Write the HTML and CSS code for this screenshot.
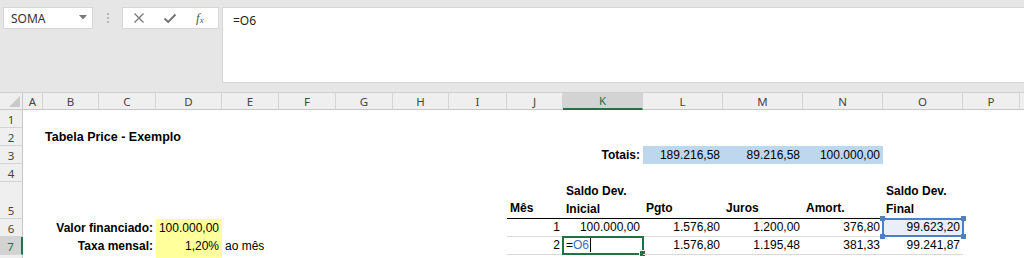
FILE: index.html
```html
<!DOCTYPE html>
<html>
<head>
<meta charset="utf-8">
<link rel="stylesheet" href="styles.css">
</head>
<body>
<div class="app">
  <div class="fbar">
    <div class="namebox">
      <span class="nb-text">SOMA</span>
      <svg class="nb-arrow" width="8" height="5" viewBox="0 0 8 5"><path d="M0 0 H8 L4 4.5 Z" fill="#7a7a7a"/></svg>
    </div>
    <div class="grip"><i></i><i></i><i></i></div>
    <div class="btns">
      <svg class="ic" width="14" height="14" viewBox="0 0 14 14"><path d="M2.5 2.5 L11.5 11.5 M11.5 2.5 L2.5 11.5" stroke="#777" stroke-width="1.3" fill="none"/></svg>
      <svg class="ic" width="14" height="14" viewBox="0 0 14 14"><path d="M1.5 7.5 L5.2 11 L12.5 3.5" stroke="#6f6f6f" stroke-width="1.8" fill="none"/></svg>
      <span class="fx"><i>f</i><sub>x</sub></span>
    </div>
    <div class="formula">=O6</div>
  </div>
  <div class="sheet">
    <!-- header row -->
    <div class="corner"><svg width="11" height="11" viewBox="0 0 11 11"><path d="M11 0 V11 H0 Z" fill="#c9c9c9"/></svg></div>
    <div class="ch">A</div><div class="ch">B</div><div class="ch">C</div><div class="ch">D</div><div class="ch">E</div><div class="ch">F</div><div class="ch">G</div><div class="ch">H</div><div class="ch">I</div><div class="ch">J</div><div class="ch sel">K</div><div class="ch">L</div><div class="ch">M</div><div class="ch">N</div><div class="ch">O</div><div class="ch">P</div><div class="ch last"></div>

    <!-- row 1 -->
    <div class="rh">1</div>
    <div class="c"></div><div class="c"></div><div class="c"></div><div class="c"></div><div class="c"></div><div class="c"></div><div class="c"></div><div class="c"></div><div class="c"></div><div class="c"></div><div class="c"></div><div class="c"></div><div class="c"></div><div class="c"></div><div class="c"></div><div class="c"></div><div class="c"></div>

    <!-- row 2 -->
    <div class="rh">2</div>
    <div class="c"></div><div class="c b title">Tabela Price - Exemplo</div><div class="c"></div><div class="c"></div><div class="c"></div><div class="c"></div><div class="c"></div><div class="c"></div><div class="c"></div><div class="c"></div><div class="c"></div><div class="c"></div><div class="c"></div><div class="c"></div><div class="c"></div><div class="c"></div><div class="c"></div>

    <!-- row 3 -->
    <div class="rh">3</div>
    <div class="c"></div><div class="c"></div><div class="c"></div><div class="c"></div><div class="c"></div><div class="c"></div><div class="c"></div><div class="c"></div><div class="c"></div><div class="c"></div><div class="c b r">Totais:</div><div class="c r blue">189.216,58</div><div class="c r blue">89.216,58</div><div class="c r blue">100.000,00</div><div class="c"></div><div class="c"></div><div class="c"></div>

    <!-- row 4 -->
    <div class="rh">4</div>
    <div class="c"></div><div class="c"></div><div class="c"></div><div class="c"></div><div class="c"></div><div class="c"></div><div class="c"></div><div class="c"></div><div class="c"></div><div class="c"></div><div class="c"></div><div class="c"></div><div class="c"></div><div class="c"></div><div class="c"></div><div class="c"></div><div class="c"></div>

    <!-- row 5 -->
    <div class="rh">5</div>
    <div class="c"></div><div class="c"></div><div class="c"></div><div class="c"></div><div class="c"></div><div class="c"></div><div class="c"></div><div class="c"></div><div class="c"></div><div class="c b hd">Mês</div><div class="c b hd two">Saldo Dev.<br>Inicial</div><div class="c b hd">Pgto</div><div class="c b hd">Juros</div><div class="c b hd">Amort.</div><div class="c b hd two">Saldo Dev.<br>Final</div><div class="c"></div><div class="c"></div>

    <!-- row 6 -->
    <div class="rh">6</div>
    <div class="c"></div><div class="c"></div><div class="c b r">Valor financiado:</div><div class="c r yel">100.000,00</div><div class="c"></div><div class="c"></div><div class="c"></div><div class="c"></div><div class="c"></div><div class="c r ln">1</div><div class="c r ln">100.000,00</div><div class="c r ln">1.576,80</div><div class="c r ln">1.200,00</div><div class="c r ln">376,80</div><div class="c r ln ref">99.623,20<i class="h1"></i><i class="h2"></i><i class="h3"></i><i class="h4"></i></div><div class="c"></div><div class="c"></div>

    <!-- row 7 -->
    <div class="rh sel">7</div>
    <div class="c"></div><div class="c"></div><div class="c b r">Taxa mensal:</div><div class="c r yel">1,20%</div><div class="c">ao mês</div><div class="c"></div><div class="c"></div><div class="c"></div><div class="c"></div><div class="c r ln">2</div><div class="c ln active"><span class="eq">=</span><span class="refc">O6</span><span class="caret"></span></div><div class="c r ln">1.576,80</div><div class="c r ln">1.195,48</div><div class="c r ln">381,33</div><div class="c r ln">99.241,87</div><div class="c"></div><div class="c"></div>

    <!-- row 8 (cut off at the bottom edge) -->
    <div class="rh"></div>
    <div class="c"></div><div class="c"></div><div class="c"></div><div class="c yel"></div><div class="c"></div><div class="c"></div><div class="c"></div><div class="c"></div><div class="c"></div><div class="c"></div><div class="c"></div><div class="c"></div><div class="c"></div><div class="c"></div><div class="c"></div><div class="c"></div><div class="c"></div>
  </div>
</div>
</body>
</html>
```

FILE: styles.css
```css
* { box-sizing: border-box; }
html, body { margin: 0; padding: 0; background: #ffffff; overflow: hidden; }
.app { width: 1024px; height: 258px; overflow: hidden; font-family: "Liberation Sans", Arial, sans-serif; }

.fbar {
  height: 93px;
  background: #e6e6e6;
  display: flex;
  align-items: flex-start;
  padding-top: 7px;
  border-bottom: 1px solid #d0d0d0;
}
.namebox {
  margin-left: 3px;
  width: 90px;
  height: 22px;
  background: #fff;
  border: 1px solid #d6d6d6;
  display: flex;
  align-items: center;
  justify-content: space-between;
  padding: 0 5px 0 7px;
  font-family: "Noto Sans", "Open Sans", sans-serif;
  font-size: 12px;
  color: #333;
}
.nb-arrow { margin-top: -2px; }
.grip {
  width: 29px;
  height: 22px;
  display: flex;
  flex-direction: column;
  align-items: center;
  justify-content: center;
  gap: 2px;
}
.grip i { display: block; width: 2px; height: 2px; background: #b8b8b8; }
.btns {
  width: 97px;
  height: 22px;
  background: #fff;
  border: 1px solid #d6d6d6;
  display: flex;
  align-items: center;
  padding: 0 0 0 9px;
  gap: 17px;
}
.fx {
  font-family: "Liberation Serif", serif;
  font-size: 13px;
  color: #555;
  line-height: 1;
  margin-left: 2px;
}
.fx i { font-style: italic; }
.fx sub { font-size: 9px; font-style: italic; vertical-align: -1px; }
.formula {
  margin-left: 3px;
  flex: 1;
  height: 76px;
  background: #fff;
  border: 1px solid #d6d6d6;
  border-right: none;
  padding: 4px 0 0 10px;
  font-family: "Noto Sans", "Open Sans", sans-serif;
  font-size: 12px;
  color: #222;
}

.sheet {
  display: grid;
  grid-template-columns: 23px 20px 56px 57px 66px 57px 57px 57px 56px 58px 56px 80px 80px 80px 80px 80px 57px 4px;
  grid-template-rows: 17px 18px 18px 18px 18px 37px 18px 18px 18px;
  font-size: 12px;
  color: #000;
}
.corner {
  background: #efefef;
  border-right: 1px solid #c8c8c8;
  border-bottom: 1px solid #c8c8c8;
  display: flex;
  align-items: flex-end;
  justify-content: flex-end;
  padding: 0 2px 2px 0;
}
.ch {
  background: #efefef;
  border-right: 1px solid #d4d4d4;
  border-bottom: 1px solid #c8c8c8;
  font-family: "Noto Sans", "Open Sans", sans-serif;
  font-size: 11.5px;
  color: #444;
  display: flex;
  align-items: center;
  justify-content: center;
}
.ch.last { border-right: none; }
.ch.sel {
  background: #d3d3d3;
  color: #217346;
  border-bottom: 2px solid #217346;
}
.rh {
  background: #efefef;
  border-right: 1px solid #c8c8c8;
  border-bottom: 1px solid #d4d4d4;
  font-family: "Noto Sans", "Open Sans", sans-serif;
  font-size: 11.5px;
  color: #444;
  display: flex;
  align-items: flex-end;
  justify-content: center;
  padding-bottom: 0;
}
.rh.sel {
  background: #d3d3d3;
  color: #217346;
  border-right: 2px solid #217346;
}
.c {
  position: relative;
  display: flex;
  align-items: flex-end;
  padding: 0 3px 2px 3px;
  white-space: nowrap;
  line-height: 14px;
  overflow: visible;
}
.b { font-weight: bold; }
.r { justify-content: flex-end; }
.title { padding-left: 2px; font-size: 12.5px; }
.blue { background: #bdd7ee; }
.yel { background: #ffff9c; }
.hd { border-bottom: 1px solid #000; padding-bottom: 3px; }
.two { line-height: 18px; padding-bottom: 0; }
.ln { border-bottom: 1px solid #d9d9d9; }

.ref { background: #e9eff8; }
.ref::before {
  content: "";
  position: absolute;
  left: -1px; top: -1px; right: -1px; bottom: -1px;
  border: 2px solid #4f7ec6;
  pointer-events: none;
}
.ref i {
  position: absolute;
  width: 5px; height: 5px;
  background: #4f7ec6;
}
.ref .h1 { left: -3px; top: -3px; }
.ref .h2 { right: -3px; top: -3px; }
.ref .h3 { left: -3px; bottom: -3px; }
.ref .h4 { right: -3px; bottom: -3px; }

.active::before {
  content: "";
  position: absolute;
  left: -1px; top: -1px; right: -1px; bottom: -1px;
  border: 2px solid #217346;
}
.active::after {
  content: "";
  position: absolute;
  right: -3px; bottom: -3px;
  width: 5px; height: 5px;
  background: #217346;
  border: 1px solid #fff;
}
.eq { color: #000; }
.refc { color: #3a6fc4; }
.caret { display: inline-block; width: 1px; height: 14px; background: #000; margin-left: 1px; }
```
